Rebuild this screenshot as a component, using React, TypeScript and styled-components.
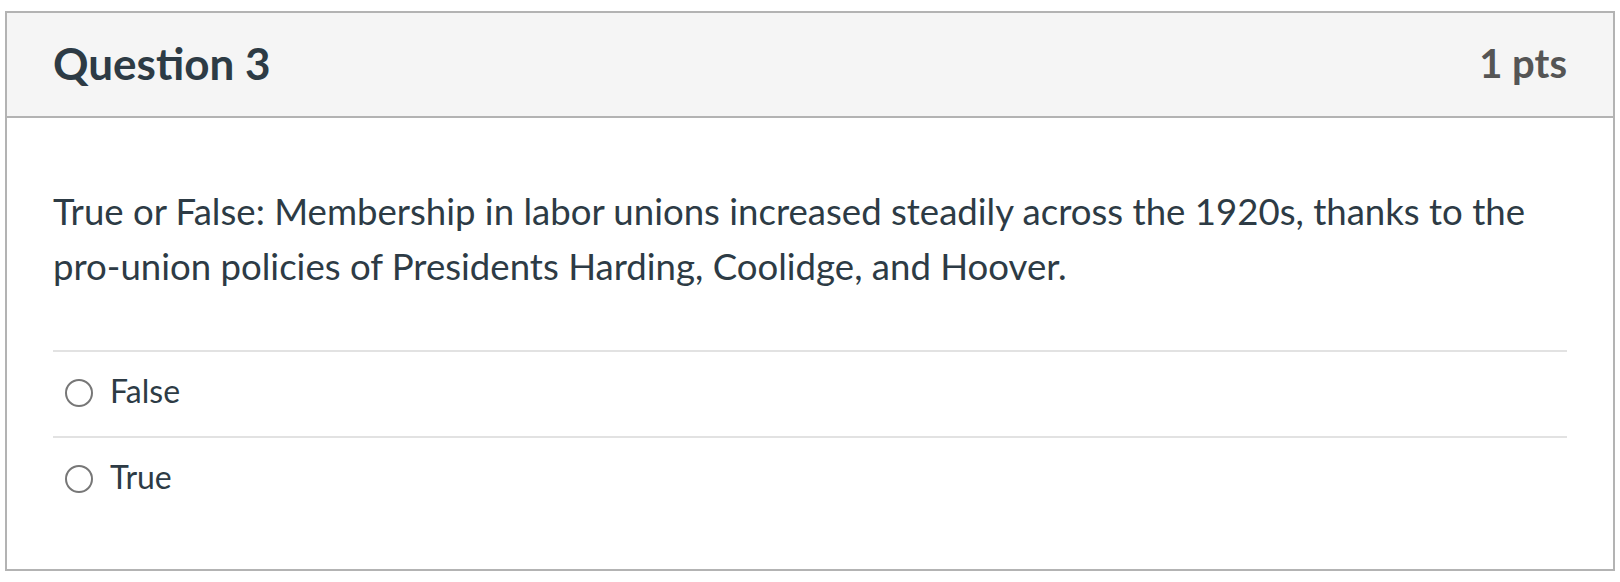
import React from "react";
import styled, { createGlobalStyle } from "styled-components";

const GlobalStyle = createGlobalStyle`
  * {
    box-sizing: border-box;
  }
  body {
    margin: 0;
    background: #ffffff;
    font-family: Lato, "Liberation Sans", sans-serif;
    color: #2d3b45;
  }
`;

const Page = styled.div`
  padding: 11px 5px 0 5px;
`;

const Card = styled.div`
  border: 2px solid #b3b3b3;
  background: #ffffff;
`;

const Header = styled.div`
  display: flex;
  align-items: center;
  justify-content: space-between;
  height: 105px;
  padding: 0 46px 4px 46px;
  background: #f5f5f5;
  border-bottom: 2px solid #b3b3b3;
`;

const Title = styled.h2`
  margin: 0;
  font-size: 44px;
  font-weight: 700;
  color: #2d3b45;
`;

const Points = styled.span`
  font-size: 40px;
  font-weight: 700;
  color: #555555;
`;

const Body = styled.div`
  padding: 66px 46px 47px 46px;
`;

const Prompt = styled.p`
  margin: 0 0 56px 0;
  font-size: 36.6px;
  line-height: 55px;
  color: #2d3b45;
`;

const Answers = styled.div`
  display: flex;
  flex-direction: column;
`;

const Answer = styled.label`
  display: flex;
  align-items: center;
  gap: 17px;
  height: 86px;
  padding: 0 0 6px 12px;
  border-top: 2px solid #e2e2e2;
  font-size: 32px;
  color: #2d3b45;
  cursor: pointer;
`;

const Radio = styled.span`
  flex: none;
  width: 28px;
  height: 28px;
  margin-top: 4px;
  border: 2px solid #777777;
  border-radius: 50%;
`;

const Label = styled.span`
  line-height: 1;
`;

const answers = ["False", "True"];

export default function App() {
  return (
    <Page>
      <GlobalStyle />
      <Card>
        <Header>
          <Title>Question 3</Title>
          <Points>1 pts</Points>
        </Header>
        <Body>
          <Prompt>
            True or False: Membership in labor unions increased steadily across
            the 1920s, thanks to the pro-union policies of Presidents Harding,
            Coolidge, and Hoover.
          </Prompt>
          <Answers>
            {answers.map((a) => (
              <Answer key={a}>
                <Radio />
                <Label>{a}</Label>
              </Answer>
            ))}
          </Answers>
        </Body>
      </Card>
    </Page>
  );
}
